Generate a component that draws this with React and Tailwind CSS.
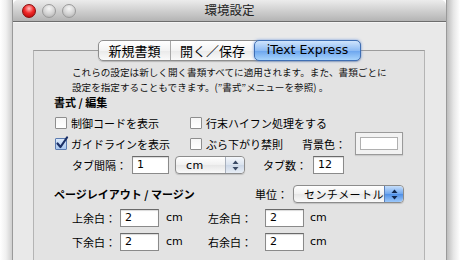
import React from "react";

const jp = { fontFamily: '"Noto Sans CJK JP", "Noto Sans", sans-serif' };
const lat = { fontFamily: '"DejaVu Sans", "Noto Sans CJK JP", sans-serif' };

function Light({ red }) {
  return (
    <div
      className={
        "w-[14px] h-[14px] rounded-full border " +
        (red
          ? "border-[#8a0c0c] bg-[radial-gradient(circle_at_50%_30%,#ffc0c0_0%,#f22a2a_45%,#a80000_100%)]"
          : "border-[#9a9a9a] bg-[radial-gradient(circle_at_50%_30%,#f6f6f6_0%,#d2d2d2_55%,#a8a8a8_100%)]")
      }
    />
  );
}

function Check({ checked }) {
  return (
    <div
      className={
        "relative w-[12px] h-[12px] border rounded-[1px] shrink-0 " +
        (checked
          ? "border-[#5b7bb0] bg-[linear-gradient(#dbe9fb,#a9c8f0)]"
          : "border-[#8e8e8e] bg-[linear-gradient(#f6f6f6,#ffffff)]")
      }
    >
      {checked && (
        <svg className="absolute -left-[1px] -top-[3px]" width="14" height="14" viewBox="0 0 14 14">
          <path d="M2.5 7.5 L5.5 11 L12 1.5" stroke="#1a2f66" strokeWidth="2.2" fill="none" strokeLinecap="round" strokeLinejoin="round" />
        </svg>
      )}
    </div>
  );
}

function Input({ value, w }) {
  return (
    <div
      className={"h-[18px] bg-white border border-[#8a8a8a] border-t-[#6a6a6a] shadow-[inset_0_1px_1px_rgba(0,0,0,0.15)] flex items-center pl-[4px] text-[11px] text-black " + w}
      style={lat}
    >
      {value}
    </div>
  );
}

function Arrows({ blue }) {
  return (
    <div
      className={
        "w-[19px] h-full rounded-r-[4px] flex items-center justify-center border-l " +
        (blue
          ? "bg-[linear-gradient(#c6defa,#6ea6ee_50%,#4f8fe6_51%,#9cc8fa)] border-[#5a7fb8]"
          : "bg-[linear-gradient(#f4f7fb,#d9e2ee_50%,#cbd6e6_51%,#e8eef6)] border-[#a8b0bc]")
      }
    >
      <svg width="7" height="11" viewBox="0 0 7 11">
        <path d="M3.5 0.5 L6.5 4 H0.5 Z" fill={blue ? "#10254a" : "#3a4a64"} />
        <path d="M3.5 10.5 L6.5 7 H0.5 Z" fill={blue ? "#10254a" : "#3a4a64"} />
      </svg>
    </div>
  );
}

function Popup({ label, w, blue, font }) {
  return (
    <div className={"h-[18px] flex items-center rounded-[4px] border border-[#8c8c8c] bg-[linear-gradient(#ffffff,#f0f0f0_50%,#e6e6e6_51%,#fafafa)] shadow-[0_1px_1px_rgba(0,0,0,0.15)] " + w}>
      <div className="flex-1 pl-[10px] text-[11px] text-black leading-none tracking-[0.4px]" style={font}>{label}</div>
      <Arrows blue={blue} />
    </div>
  );
}

export default function App() {
  return (
    <div className="w-[460px] h-[260px] bg-white overflow-hidden flex">
      {/* left shadow */}
      <div className="w-[12px] h-full bg-[linear-gradient(to_right,#ffffff,#f0f0f0_50%,#cfcfcf)]" />
      <div className="w-[435px] h-full flex flex-col border-x border-[#9a9a9a]">
        {/* title bar */}
        <div className="h-[22px] shrink-0 rounded-t-[5px] bg-[linear-gradient(#ececec,#d0d0d0_50%,#b4b4b4)] border-b border-[#6d6d6d] flex items-center relative">
          <div className="flex gap-[6px] pl-[9px]">
            <Light red />
            <Light />
            <Light />
          </div>
          <div className="absolute inset-0 flex items-center justify-center text-[12.5px] text-[#222]" style={jp}>
            環境設定
          </div>
        </div>
        {/* content */}
        <div className="flex-1 bg-[#e9e9e9] border-t border-[#f4f4f4] pl-[20px] pr-[21px] pt-[27px]">
          <div className="relative h-[250px] border border-[#b4b4b4] border-t-[#9c9c9c] bg-[#e3e3e3]">
            {/* segmented tabs */}
            <div className="absolute left-[64px] -top-[11px] h-[21px] w-[263px] flex rounded-[5px] border border-[#8e8e8e] bg-[linear-gradient(#ffffff,#f3f3f3_50%,#e9e9e9_51%,#fafafa)] shadow-[0_1px_1px_rgba(0,0,0,0.2)] text-[13px] text-black">
              <div className="w-[72px] flex items-center justify-center border-r border-[#a8a8a8]" style={jp}>新規書類</div>
              <div className="w-[83px] flex items-center justify-center" style={jp}>開く／保存</div>
              <div className="flex-1 -my-[1px] -mr-[1px] flex items-center justify-center rounded-[5px] border border-[#3f6fb4] bg-[linear-gradient(#cfe4fc,#8ebcf4_50%,#6aa4ee_51%,#a8d4fc)] shadow-[0_0_3px_rgba(60,120,220,0.7)]">
                <span style={{ fontFamily: '"DejaVu Sans", sans-serif', fontSize: "12.5px" }}>iText Express</span>
              </div>
            </div>

            <div className="pt-[14px] text-black">
              <div className="pl-[38px] text-[9.6px] leading-[15px] text-[#111]" style={jp}>
                <div>これらの設定は新しく開く書類すべてに適用されます。また、書類ごとに</div>
                <div>設定を指定することもできます。(”書式”メニューを参照) 。</div>
              </div>

              <div className="pl-[20px] h-[14px] flex items-center text-[11px] font-bold" style={jp}>書式 / 編集</div>

              <div className="mt-[4px] h-[20px] flex items-center text-[11px]" style={jp}>
                <div className="pl-[21px] w-[156px] flex items-center gap-[4px]"><Check /><span>制御コードを表示</span></div>
                <div className="flex items-center gap-[4px]"><Check /><span>行末ハイフン処理をする</span></div>
              </div>

              <div className="mt-[1px] h-[20px] flex items-center text-[11px]" style={jp}>
                <div className="pl-[21px] w-[156px] flex items-center gap-[4px]"><Check checked /><span>ガイドラインを表示</span></div>
                <div className="w-[112px] flex items-center gap-[4px]"><Check /><span>ぶら下がり禁則</span></div>
                <span className="w-[53px]">背景色：</span>
                <div className="w-[48px] h-[23px] -mt-[2px] border border-[#9a9a9a] bg-[#f2f2f2] p-[4px] shadow-[0_1px_1px_rgba(0,0,0,0.1)]">
                  <div className="w-full h-full bg-white border border-[#b0b0b0]" />
                </div>
              </div>

              <div className="mt-[1px] h-[20px] flex items-center text-[11px]" style={jp}>
                <span className="pl-[38px] w-[98px]">タブ間隔：</span>
                <Input value="1" w="w-[37px]" />
                <div className="ml-[6px]"><Popup label="cm" w="w-[70px]" font={lat} /></div>
                <span className="ml-[18px] w-[50px]">タブ数：</span>
                <Input value="12" w="w-[31px]" />
              </div>

              <div className="mt-[9px] h-[20px] flex items-center text-[11px]" style={jp}>
                <span className="pl-[20px] w-[221px] font-bold">ページレイアウト / マージン</span>
                <span className="w-[38px]">単位：</span>
                <Popup label="センチメートル" w="w-[111px]" blue font={jp} />
              </div>

              <div className="mt-[4px] h-[20px] flex items-center text-[11px]" style={jp}>
                <span className="pl-[38px] w-[86px]">上余白：</span>
                <Input value="2" w="w-[39px]" />
                <span className="ml-[7px] w-[42px]" style={lat}>cm</span>
                <span className="w-[57px]">左余白：</span>
                <Input value="2" w="w-[39px]" />
                <span className="ml-[6px]" style={lat}>cm</span>
              </div>

              <div className="mt-[4px] h-[20px] flex items-center text-[11px]" style={jp}>
                <span className="pl-[38px] w-[86px]">下余白：</span>
                <Input value="2" w="w-[39px]" />
                <span className="ml-[7px] w-[42px]" style={lat}>cm</span>
                <span className="w-[57px]">右余白：</span>
                <Input value="2" w="w-[39px]" />
                <span className="ml-[6px]" style={lat}>cm</span>
              </div>
            </div>
          </div>
        </div>
      </div>
      {/* right shadow */}
      <div className="flex-1 h-full bg-[linear-gradient(to_right,#bdbdbd,#e6e6e6_50%,#ffffff)]" />
    </div>
  );
}
